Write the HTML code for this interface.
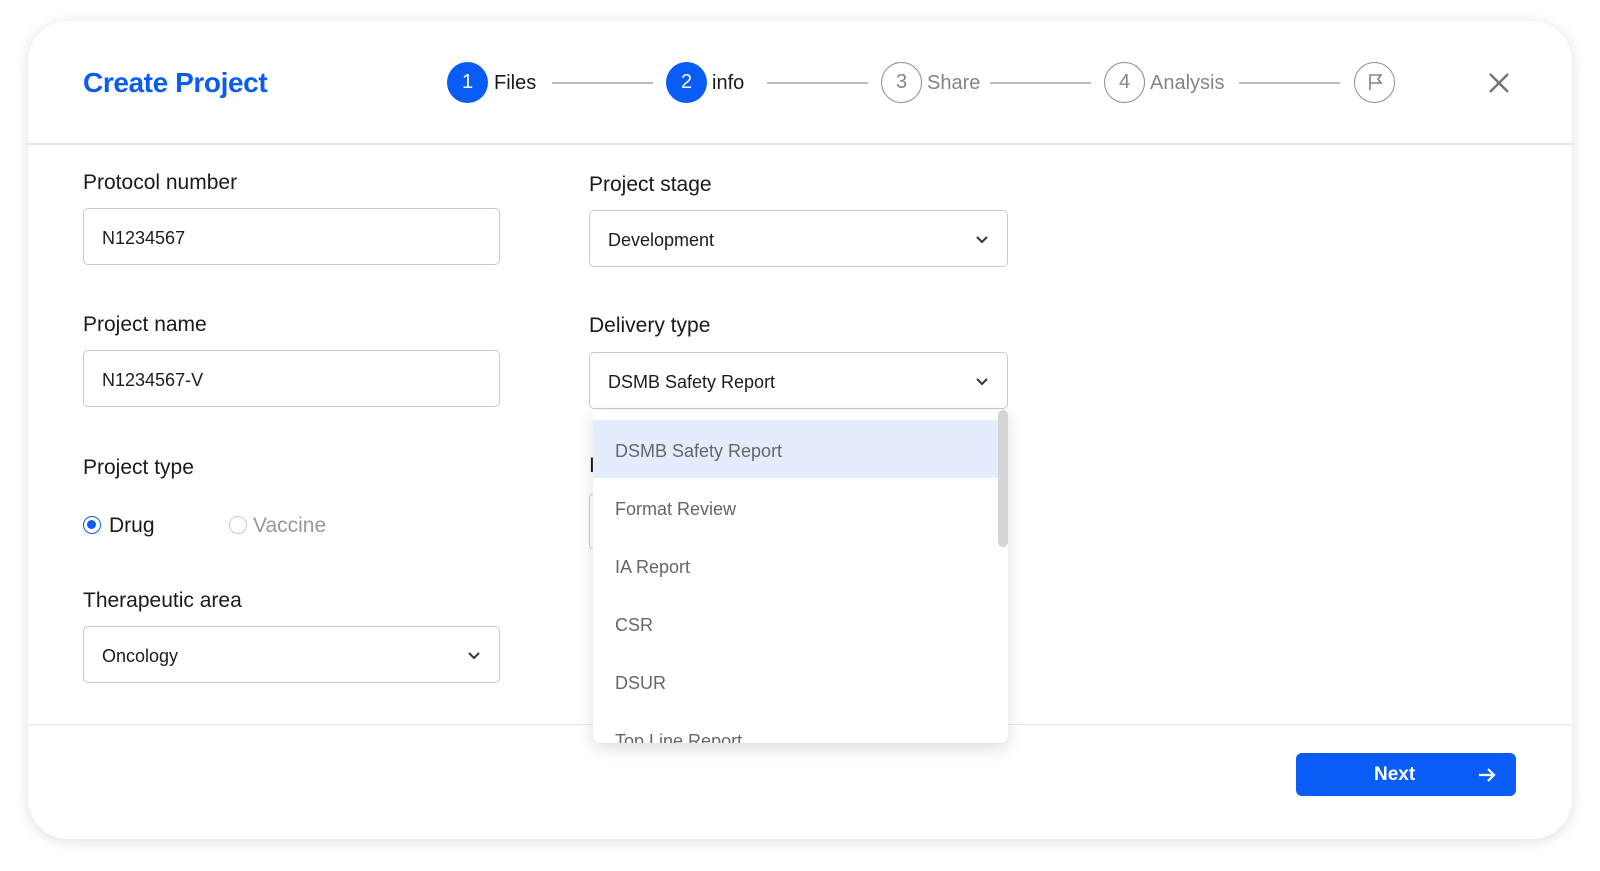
<!DOCTYPE html>
<html><head><style>
*{box-sizing:border-box;margin:0;padding:0}
body{width:1600px;height:871px;background:#fff;font-family:"Liberation Sans",sans-serif;position:relative;overflow:hidden}
.card{position:absolute;left:28px;top:21px;width:1544px;height:818px;background:#fff;border-radius:40px;box-shadow:0 2px 14px rgba(0,0,0,.13)}
.abs{position:absolute}
.sep{position:absolute;left:28px;width:1544px;height:2px;background:#e2e2e2}
.title{left:83px;top:67px;font-size:28px;color:#0b5cf2;font-weight:bold;letter-spacing:-0.4px}
.circ{width:41px;height:41px;border-radius:50%;text-align:center;line-height:41px;font-size:20px}
.on{background:#0a5cf6;color:#fff}
.off{border:1.5px solid #8a8e96;color:#80848c;line-height:38px}
.st{font-size:20px;top:72px}
.ln{height:1.5px;background:#b9bcc2;top:82px}
.lbl{font-size:21px;color:#1a1a1a;font-weight:500}
.box{border:1.5px solid #c9c9c9;border-radius:5px;background:#fff;font-size:18px;color:#1c1c1c;padding-left:18px;padding-top:3px;display:flex;align-items:center}
.chev{position:absolute;right:18px;top:50%;margin-top:-4px}
.item{position:absolute;left:0;width:405px;height:58px;padding-left:22px;font-size:18px;color:#666;line-height:62px}
</style></head><body>
<div class="card"></div>
<div class="sep" style="top:143px"></div>
<div class="sep" style="top:724px;height:1px"></div>
<div class="abs title">Create Project</div>

<div class="abs circ on" style="left:447px;top:62px">1</div>
<div class="abs st" style="left:494px;color:#1a1a1a">Files</div>
<div class="abs ln" style="left:552px;width:101px"></div>
<div class="abs circ on" style="left:666px;top:62px">2</div>
<div class="abs st" style="left:712px;color:#1a1a1a">info</div>
<div class="abs ln" style="left:767px;width:101px"></div>
<div class="abs circ off" style="left:881px;top:62px">3</div>
<div class="abs st" style="left:927px;color:#80848c">Share</div>
<div class="abs ln" style="left:990px;width:101px"></div>
<div class="abs circ off" style="left:1104px;top:62px">4</div>
<div class="abs st" style="left:1150px;color:#80848c">Analysis</div>
<div class="abs ln" style="left:1239px;width:101px"></div>
<div class="abs circ off" style="left:1354px;top:62px"><svg width="18" height="20" viewBox="0 0 18 20" style="margin-top:9px"><path d="M4 18V3h11l-3 4 3 4H4" fill="none" stroke="#80848c" stroke-width="1.6"/></svg></div>
<svg class="abs" style="left:1487px;top:71px" width="24" height="24" viewBox="0 0 24 24"><path d="M3 3L21 21M21 3L3 21" stroke="#6f737a" stroke-width="2.4"/></svg>

<div class="abs lbl" style="left:83px;top:171px">Protocol number</div>
<div class="abs box" style="left:83px;top:208px;width:417px;height:57px">N1234567</div>
<div class="abs lbl" style="left:589px;top:173px">Project stage</div>
<div class="abs box" style="left:589px;top:210px;width:419px;height:57px">Development<svg class="chev" width="14" height="10" viewBox="0 0 14 10"><path d="M2 2l5 5 5-5" fill="none" stroke="#333" stroke-width="2"/></svg></div>

<div class="abs lbl" style="left:83px;top:313px">Project name</div>
<div class="abs box" style="left:83px;top:350px;width:417px;height:57px">N1234567-V</div>
<div class="abs lbl" style="left:589px;top:314px">Delivery type</div>
<div class="abs box" style="left:589px;top:352px;width:419px;height:57px">DSMB Safety Report<svg class="chev" width="14" height="10" viewBox="0 0 14 10"><path d="M2 2l5 5 5-5" fill="none" stroke="#333" stroke-width="2"/></svg></div>

<div class="abs lbl" style="left:83px;top:456px">Project type</div>
<div class="abs" style="left:83px;top:516px;width:18px;height:18px;border-radius:50%;border:1.5px solid #0a5cf6"><div style="margin:3px;width:9px;height:9px;border-radius:50%;background:#0a5cf6"></div></div>
<div class="abs" style="left:109px;top:514px;font-size:21px;color:#1a1a1a">Drug</div>
<div class="abs" style="left:229px;top:516px;width:18px;height:18px;border-radius:50%;border:1.5px solid #ccc"></div>
<div class="abs" style="left:253px;top:514px;font-size:21px;color:#999">Vaccine</div>

<div class="abs lbl" style="left:589px;top:454px">I</div>
<div class="abs box" style="left:589px;top:493px;width:419px;height:57px"></div>

<div class="abs lbl" style="left:83px;top:589px">Therapeutic area</div>
<div class="abs box" style="left:83px;top:626px;width:417px;height:57px">Oncology<svg class="chev" width="14" height="10" viewBox="0 0 14 10"><path d="M2 2l5 5 5-5" fill="none" stroke="#333" stroke-width="2"/></svg></div>

<div class="abs" style="left:593px;top:410px;width:415px;height:333px;background:#fff;border-radius:0 0 8px 8px;box-shadow:0 6px 16px rgba(0,0,0,.13);overflow:hidden">
<div class="item" style="top:10px;background:#e3edfd">DSMB Safety Report</div>
<div class="item" style="top:68px">Format Review</div>
<div class="item" style="top:126px">IA Report</div>
<div class="item" style="top:184px">CSR</div>
<div class="item" style="top:242px">DSUR</div>
<div class="item" style="top:300px">Top Line Report</div>
<div class="abs" style="left:405px;top:0;width:10px;height:137px;background:#d5d5d5;border-radius:5px"></div>
</div>

<div class="abs" style="left:1296px;top:753px;width:220px;height:43px;background:#0a5cf6;border-radius:6px;color:#fff;font-size:19px;font-weight:bold;line-height:43px;padding-left:78px">Next<svg class="abs" style="left:182px;top:13px" width="18" height="18" viewBox="0 0 18 18"><path d="M1 9h15M10 3l6 6-6 6" fill="none" stroke="#fff" stroke-width="2.2"/></svg></div>
</body></html>
